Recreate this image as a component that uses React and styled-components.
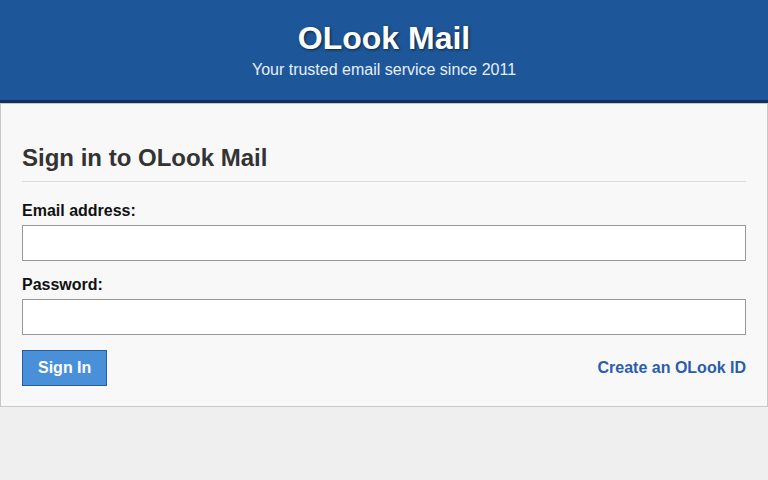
import React from "react";
import styled, { createGlobalStyle } from "styled-components";

const GlobalStyle = createGlobalStyle`
  body {
    margin: 0;
    background: #efefef;
    font-family: "Liberation Sans", Arial, sans-serif;
  }
`;

const Header = styled.header`
  background: #1e5799;
  border-bottom: 3px solid #11315c;
  color: #fff;
  text-align: center;
  padding: 20px 20px 21px;
`;

const Logo = styled.h1`
  margin: 0 0 4px;
  font-size: 32px;
  line-height: 37px;
  font-weight: bold;
  text-shadow: 1px 1px 3px rgba(0, 0, 0, 0.6);
`;

const Tagline = styled.p`
  margin: 0;
  font-size: 16px;
  line-height: 18px;
  color: #e6eef8;
`;

const Card = styled.main`
  background: #f8f8f8;
  border: 1px solid #c8c8c8;
  box-shadow: 0 1px 3px rgba(0, 0, 0, 0.2);
  padding: 20px 21px;
`;

const Title = styled.h2`
  margin: 20px 0 20px;
  padding-bottom: 10px;
  border-bottom: 1px solid #dddddd;
  font-size: 24px;
  line-height: 27px;
  color: #333333;
`;

const Field = styled.div`
  margin-bottom: 15px;
`;

const Label = styled.label`
  display: block;
  margin-bottom: 5px;
  font-size: 16px;
  line-height: 18px;
  font-weight: bold;
  color: #111;
`;

const Input = styled.input`
  display: block;
  box-sizing: border-box;
  width: 100%;
  height: 36px;
  border: 1px solid #999999;
  background: #fff;
  padding: 6px 8px;
  font-size: 16px;
  font-family: inherit;
`;

const Actions = styled.div`
  display: flex;
  justify-content: space-between;
  align-items: center;
`;

const Button = styled.button`
  height: 36px;
  padding: 0 15px;
  background: #4a90d9;
  border: 1px solid #2a5d9f;
  color: #fff;
  font-family: inherit;
  font-size: 16px;
  font-weight: bold;
  cursor: pointer;
`;

const Link = styled.a`
  color: #2a5ea8;
  font-size: 16px;
  font-weight: bold;
  text-decoration: none;
`;

export default function App() {
  return (
    <>
      <GlobalStyle />
      <Header>
        <Logo>OLook Mail</Logo>
        <Tagline>Your trusted email service since 2011</Tagline>
      </Header>
      <Card>
        <Title>Sign in to OLook Mail</Title>
        <Field>
          <Label htmlFor="email">Email address:</Label>
          <Input id="email" type="email" />
        </Field>
        <Field>
          <Label htmlFor="password">Password:</Label>
          <Input id="password" type="password" />
        </Field>
        <Actions>
          <Button>Sign In</Button>
          <Link href="#">Create an OLook ID</Link>
        </Actions>
      </Card>
    </>
  );
}
